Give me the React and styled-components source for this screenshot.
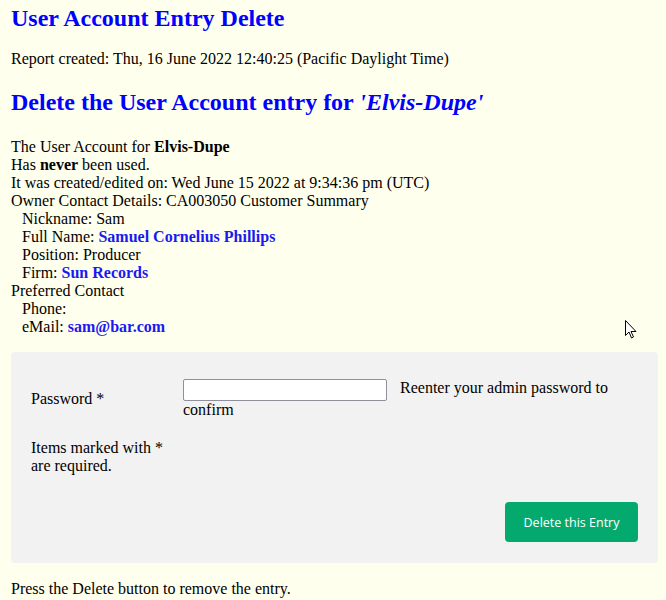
import React from 'react'
import styled, { createGlobalStyle } from 'styled-components'

const GlobalStyle = createGlobalStyle`
  html, body {
    margin: 0;
    background: #ffffee;
  }
  body {
    font-family: "Liberation Serif", "Times New Roman", serif;
    font-size: 16px;
    color: #000;
  }
`

const Page = styled.div`
  position: relative;
  padding: 8px 8px 0 11px;
  min-height: 592px;
`

const Title = styled.h2`
  margin: 0;
  font-size: 24px;
  line-height: 20px;
  color: #0000ff;
  font-weight: bold;

  em {
    font-style: italic;
  }
`

const Created = styled.p`
  margin: 22px 0 24px;
  line-height: 18px;
`

const Details = styled.div`
  margin-top: 26px;
  line-height: 18px;
`

const Line = styled.div`
  padding-left: ${props => (props.$indent ? '11px' : '0')};
`

const Link = styled.b`
  color: #1a1af0;
`

const Panel = styled.form`
  margin-top: 16px;
  background: #f2f2f2;
  border-radius: 4px;
  padding: 27px 20px 21px 20px;
  display: flex;
  flex-direction: column;
`

const Row = styled.div`
  display: grid;
  grid-template-columns: 152px 1fr;
  align-items: center;
  margin-bottom: ${props => props.$gap || 0}px;
  line-height: 18px;
`

const Field = styled.div`
  line-height: 18px;
`

const Input = styled.input`
  width: 204px;
  height: 22px;
  box-sizing: border-box;
  border: 1px solid #8f8f9d;
  border-radius: 2px;
  background: #fff;
  margin: 0 13px 0 0;
  padding: 1px 2px;
  vertical-align: top;
`

const ButtonBar = styled.div`
  display: flex;
  justify-content: flex-end;
  margin-top: 27px;
`

const Button = styled.button`
  background: #04aa6d;
  color: #fff;
  border: none;
  border-radius: 4px;
  width: 133px;
  height: 40px;
  font-family: "Open Sans", "Noto Sans", sans-serif;
  font-size: 12.5px;
  cursor: pointer;
`

const Footer = styled.p`
  margin: 17px 0 0;
  line-height: 18px;
`

const Cursor = styled.svg`
  position: absolute;
  left: 625px;
  top: 320px;
`

export default function App() {
  return (
    <>
      <GlobalStyle />
      <Page>
        <Title>User Account Entry Delete</Title>
        <Created>Report created: Thu, 16 June 2022 12:40:25 (Pacific Daylight Time)</Created>
        <Title>
          Delete the User Account entry for <em>'Elvis-Dupe'</em>
        </Title>
        <Details>
          <Line>The User Account for <b>Elvis-Dupe</b></Line>
          <Line>Has <b>never</b> been used.</Line>
          <Line>It was created/edited on: Wed June 15 2022 at 9:34:36 pm (UTC)</Line>
          <Line>Owner Contact Details: CA003050 Customer Summary</Line>
          <Line $indent>Nickname: Sam</Line>
          <Line $indent>Full Name: <Link>Samuel Cornelius Phillips</Link></Line>
          <Line $indent>Position: Producer</Line>
          <Line $indent>Firm: <Link>Sun Records</Link></Line>
          <Line>Preferred Contact</Line>
          <Line $indent>Phone:</Line>
          <Line $indent>eMail: <Link>sam@bar.com</Link></Line>
        </Details>
        <Panel onSubmit={e => e.preventDefault()}>
          <Row $gap={20}>
            <span>Password *</span>
            <Field>
              <Input type="password" />
              Reenter your admin password to confirm
            </Field>
          </Row>
          <Row>
            <span>Items marked with *<br />are required.</span>
            <span />
          </Row>
          <ButtonBar>
            <Button type="submit">Delete this Entry</Button>
          </ButtonBar>
        </Panel>
        <Footer>Press the Delete button to remove the entry.</Footer>
        <Cursor width="12" height="19" viewBox="0 0 12 19">
          <path d="M0.5 0.5 L0.5 15.5 L4 12 L6.5 18 L8.5 17 L6 11.5 L11 11.5 Z" fill="#fff" stroke="#000" strokeWidth="1" strokeLinejoin="miter" />
        </Cursor>
      </Page>
    </>
  )
}
